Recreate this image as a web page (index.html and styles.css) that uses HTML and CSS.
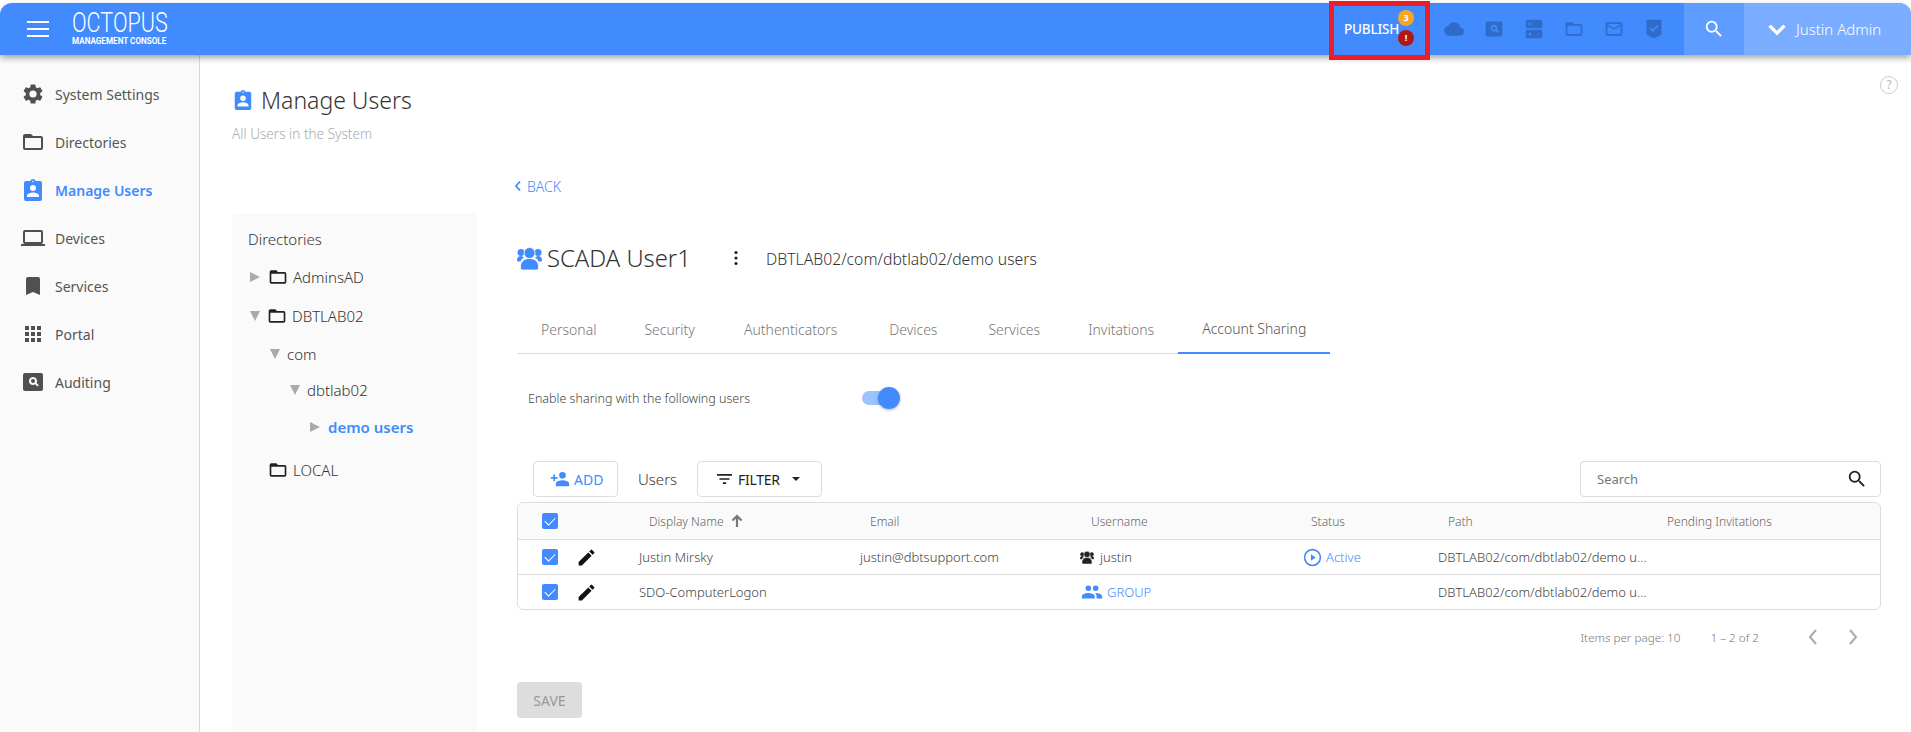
FILE: index.html
```html
<!DOCTYPE html>
<html lang="en">
<head>
<meta charset="utf-8">
<title>Manage Users</title>
<link rel="stylesheet" href="styles.css">
</head>
<body>
<header class="topbar">
  <div class="burger"><span></span><span></span><span></span></div>
  <div class="logo"><div class="logo-main">OCTOPUS</div><div class="logo-sub">MANAGEMENT CONSOLE</div></div>
  <div class="spring"></div>
  <div class="publish">
    <span>PUBLISH</span>
    <b class="pub-badge warn">3</b>
    <b class="pub-badge err">!</b>
  </div>
  <div class="status-icons">
    <svg viewBox="0 0 24 24"><path d="M19.35 10.04A7.49 7.49 0 0 0 12 4a7.5 7.5 0 0 0-6.65 4.04A6 6 0 0 0 6 20h13a5 5 0 0 0 .35-9.96z"/></svg>
    <svg viewBox="0 0 24 24"><path fill-rule="evenodd" d="M4 3h16a2 2 0 0 1 2 2v14a2 2 0 0 1-2 2H4a2 2 0 0 1-2-2V5a2 2 0 0 1 2-2zm8 4a4 4 0 1 0 2.2 7.3l2.3 2.3 1.4-1.4-2.3-2.3A4 4 0 0 0 12 7zm0 2a2 2 0 1 1 0 4 2 2 0 0 1 0-4z"/></svg>
    <svg viewBox="0 0 24 24"><path fill-rule="evenodd" d="M4 1h16a2 2 0 0 1 2 2v6a2 2 0 0 1-2 2H4a2 2 0 0 1-2-2V3a2 2 0 0 1 2-2zm3 3.500a1.500 1.500 0 1 0 0 3 1.500 1.500 0 0 0 0-3zM4 13h16a2 2 0 0 1 2 2v6a2 2 0 0 1-2 2H4a2 2 0 0 1-2-2v-6a2 2 0 0 1 2-2zm3 3.500a1.500 1.500 0 1 0 0 3 1.500 1.500 0 0 0 0-3z"/></svg>
    <svg viewBox="0 0 24 24"><path d="M20 6h-8l-2-2H4a2 2 0 0 0-2 2v12a2 2 0 0 0 2 2h16a2 2 0 0 0 2-2V8a2 2 0 0 0-2-2zm0 12H4V8h16v10z"/></svg>
    <svg viewBox="0 0 24 24"><path d="M20 4H4a2 2 0 0 0-2 2v12a2 2 0 0 0 2 2h16a2 2 0 0 0 2-2V6a2 2 0 0 0-2-2zm0 14H4V8l8 5 8-5v10zm-8-7L4 6h16l-8 5z"/></svg>
    <svg viewBox="0 0 24 24"><path fill-rule="evenodd" d="M3 1h18v18l-9 4-9-4V1zm7.500 14.500 7-7L16 7l-5.500 5.500L8 10l-1.500 1.500 4 4z"/></svg>
  </div>
  <div class="top-search">
    <svg viewBox="0 0 24 24"><path d="M15.500 14h-.79l-.28-.27A6.470 6.470 0 0 0 16 9.500 6.500 6.500 0 1 0 9.500 16c1.610 0 3.090-.59 4.230-1.570l.27.28v.79l5 4.990L20.490 19l-4.990-5zm-6 0a4.500 4.500 0 1 1 0-9 4.500 4.500 0 0 1 0 9z"/></svg>
  </div>
  <div class="top-user">
    <svg viewBox="0 0 24 24"><path d="M3 8l9 9 9-9" fill="none" stroke="#fff" stroke-width="4"/></svg>
    <span>Justin Admin</span>
  </div>
</header>

<div class="shell">
  <nav class="sidebar">
    <a class="nav-item"><svg viewBox="0 0 24 24"><path d="M19.140 12.940a7.400 7.400 0 0 0 0-1.880l2.030-1.580a.5.5 0 0 0 .12-.61l-1.920-3.320a.5.5 0 0 0-.59-.22l-2.390.96a7 7 0 0 0-1.620-.94l-.36-2.540a.5.5 0 0 0-.48-.41h-3.840a.5.5 0 0 0-.47.410l-.36 2.540a7.200 7.200 0 0 0-1.620.94l-2.390-.96a.5.5 0 0 0-.59.22L2.740 8.870a.5.5 0 0 0 .12.61l2.030 1.580a7.500 7.500 0 0 0 0 1.880l-2.030 1.580a.5.5 0 0 0-.12.61l1.920 3.320c.12.22.37.29.59.22l2.390-.96c.5.380 1.030.7 1.620.94l.36 2.540c.05.240.24.410.48.410h3.840c.24 0 .44-.17.47-.41l.36-2.540a7 7 0 0 0 1.620-.94l2.390.96c.22.08.47 0 .59-.22l1.920-3.320a.5.5 0 0 0-.12-.61l-2.010-1.580zM12 15.600a3.600 3.600 0 1 1 0-7.200 3.600 3.600 0 0 1 0 7.200z"/></svg><span>System Settings</span></a>
    <a class="nav-item"><svg viewBox="0 0 24 24"><path d="M20 6h-8l-2-2H4a2 2 0 0 0-2 2v12a2 2 0 0 0 2 2h16a2 2 0 0 0 2-2V8a2 2 0 0 0-2-2zm0 12H4V8h16v10z"/></svg><span>Directories</span></a>
    <a class="nav-item active"><svg viewBox="0 0 24 24"><path fill-rule="evenodd" d="M19 3h-4.180A3 3 0 0 0 12 1a3 3 0 0 0-2.820 2H5a2 2 0 0 0-2 2v16a2 2 0 0 0 2 2h14a2 2 0 0 0 2-2V5a2 2 0 0 0-2-2zm-7-.25a.75.75 0 1 1 0 1.500.75.75 0 0 1 0-1.500zM12 7a3 3 0 1 1 0 6 3 3 0 0 1 0-6zm6 12H6v-1.400c0-2 4-3.100 6-3.100s6 1.100 6 3.100V19z"/></svg><span>Manage Users</span></a>
    <a class="nav-item"><svg viewBox="0 0 24 24"><path d="M20 18a2 2 0 0 0 2-2V6a2 2 0 0 0-2-2H4a2 2 0 0 0-2 2v10a2 2 0 0 0 2 2H0v2h24v-2h-4zM4 6h16v10H4V6z"/></svg><span>Devices</span></a>
    <a class="nav-item"><svg viewBox="0 0 24 24"><path d="M17 3H7a2 2 0 0 0-2 2v16l7-3 7 3V5a2 2 0 0 0-2-2z"/></svg><span>Services</span></a>
    <a class="nav-item"><svg viewBox="0 0 24 24"><path d="M4 8h4V4H4v4zm6 12h4v-4h-4v4zm-6 0h4v-4H4v4zm0-6h4v-4H4v4zm6 0h4v-4h-4v4zm6-10v4h4V4h-4zm-6 4h4V4h-4v4zm6 6h4v-4h-4v4zm0 6h4v-4h-4v4z"/></svg><span>Portal</span></a>
    <a class="nav-item"><svg viewBox="0 0 24 24"><path fill-rule="evenodd" d="M4 3h16a2 2 0 0 1 2 2v14a2 2 0 0 1-2 2H4a2 2 0 0 1-2-2V5a2 2 0 0 1 2-2zm8 4a4 4 0 1 0 2.200 7.300l2.300 2.300 1.400-1.400-2.300-2.300A4 4 0 0 0 12 7zm0 2a2 2 0 1 1 0 4 2 2 0 0 1 0-4z"/></svg><span>Auditing</span></a>
  </nav>

  <main class="content">
    <div class="page-head">
      <h1 class="page-title"><svg viewBox="0 0 24 24"><path fill-rule="evenodd" d="M19 3h-4.180A3 3 0 0 0 12 1a3 3 0 0 0-2.820 2H5a2 2 0 0 0-2 2v16a2 2 0 0 0 2 2h14a2 2 0 0 0 2-2V5a2 2 0 0 0-2-2zm-7-.25a.75.75 0 1 1 0 1.500.75.75 0 0 1 0-1.500zM12 7a3 3 0 1 1 0 6 3 3 0 0 1 0-6zm6 12H6v-1.400c0-2 4-3.100 6-3.100s6 1.100 6 3.100V19z"/></svg>Manage Users</h1>
      <p class="page-sub">All Users in the System</p>
      <div class="help">?</div>
    </div>

    <div class="columns">
      <aside class="tree">
        <div class="tree-title">Directories</div>
        <div class="tree-row t1"><i class="tri right"></i><svg class="folder" viewBox="0 0 24 24"><path d="M20 6h-8l-2-2H4a2 2 0 0 0-2 2v12a2 2 0 0 0 2 2h16a2 2 0 0 0 2-2V8a2 2 0 0 0-2-2zm0 12H4V8h16v10z"/></svg><span>AdminsAD</span></div>
        <div class="tree-row t2"><i class="tri down"></i><svg class="folder" viewBox="0 0 24 24"><path d="M20 6h-8l-2-2H4a2 2 0 0 0-2 2v12a2 2 0 0 0 2 2h16a2 2 0 0 0 2-2V8a2 2 0 0 0-2-2zm0 12H4V8h16v10z"/></svg><span>DBTLAB02</span></div>
        <div class="tree-row t3"><i class="tri down"></i><span>com</span></div>
        <div class="tree-row t4"><i class="tri down"></i><span>dbtlab02</span></div>
        <div class="tree-row t5 sel"><i class="tri right"></i><span>demo users</span></div>
        <div class="tree-row t6"><svg class="folder" viewBox="0 0 24 24"><path d="M20 6h-8l-2-2H4a2 2 0 0 0-2 2v12a2 2 0 0 0 2 2h16a2 2 0 0 0 2-2V8a2 2 0 0 0-2-2zm0 12H4V8h16v10z"/></svg><span>LOCAL</span></div>
      </aside>

      <section class="detail">
        <a class="back"><svg viewBox="0 0 10 12"><path d="M7 1.500 3 6l4 4.500" fill="none" stroke="#418BFF" stroke-width="1.800"/></svg>BACK</a>
        <div class="user-head">
          <svg class="group-ic" viewBox="0 0 25 23"><g fill="#418BFF"><circle cx="4" cy="5.500" r="3.500"/><circle cx="21" cy="5.500" r="3.500"/><path d="M0 13c0-2 1.500-4 4-4 1 0 2 .5 3 1.500-1.500.8-3 2-3.500 4H1c-.6 0-1-.6-1-1.500zM25 13c0-2-1.500-4-4-4-1 0-2 .5-3 1.500 1.500.8 3 2 3.500 4H24c.6 0 1-.6 1-1.500z"/><circle cx="12.500" cy="6" r="5.500" stroke="#fff" stroke-width=".8"/><path d="M3.500 20c0-5 3-8.500 9-8.500s9 3.500 9 8.500v1c0 1-1 2-2 2h-14c-1 0-2-1-2-2z" stroke="#fff" stroke-width=".8"/></g></svg>
          <h2 class="user-name">SCADA User1</h2>
          <svg class="dots" viewBox="0 0 4 16"><circle cx="2" cy="2.500" r="1.600"/><circle cx="2" cy="8" r="1.600"/><circle cx="2" cy="13.500" r="1.600"/></svg>
          <span class="user-path">DBTLAB02/com/dbtlab02/demo users</span>
        </div>
        <div class="tabs">
          <span>Personal</span><span>Security</span><span>Authenticators</span><span>Devices</span><span>Services</span><span>Invitations</span><span class="on">Account Sharing</span>
        </div>
        <div class="share-row">
          <span>Enable sharing with the following users</span>
          <div class="toggle"><i></i></div>
        </div>
        <div class="toolbar">
          <button class="btn add"><svg viewBox="0 0 24 20"><path fill="#418BFF" d="M15 9a4 4 0 1 0 0-8 4 4 0 0 0 0 8zM6 7V4H4v3H1v2h3v3h2V9h3V7H6zm9 4c-2.700 0-8 1.300-8 4v3h16v-3c0-2.700-5.300-4-8-4z"/></svg>ADD</button>
          <span class="tb-label">Users</span>
          <button class="btn filter"><svg viewBox="0 0 18 12"><path fill="#222" d="M0 0h18v2H0zM3 5h12v2H3zM7 10h4v2H7z"/></svg>FILTER<i class="caret"></i></button>
          <div class="spring"></div>
          <div class="search"><span>Search</span><svg viewBox="0 0 24 24"><path fill="#222" d="M15.500 14h-.79l-.28-.27A6.470 6.470 0 0 0 16 9.500 6.500 6.500 0 1 0 9.500 16c1.610 0 3.090-.59 4.230-1.570l.27.28v.79l5 4.990L20.490 19l-4.990-5zm-6 0a4.500 4.500 0 1 1 0-9 4.500 4.500 0 0 1 0 9z"/></svg></div>
        </div>
        <div class="table">
          <div class="tr th">
            <div class="c-check"><i class="cb"></i></div>
            <div class="c-edit"></div>
            <div class="c-name hd">Display Name<svg viewBox="0 0 12 14"><path d="M6 13V2.500M1.500 6.500 6 2l4.500 4.500" fill="none" stroke="#777" stroke-width="2.200"/></svg></div>
            <div class="c-mail hd">Email</div>
            <div class="c-user hd">Username</div>
            <div class="c-stat hd">Status</div>
            <div class="c-path hd">Path</div>
            <div class="c-pend">Pending Invitations</div>
          </div>
          <div class="tr">
            <div class="c-check"><i class="cb"></i></div>
            <div class="c-edit"><svg viewBox="0 0 24 24"><path d="M3 17.250V21h3.750L17.810 9.940l-3.750-3.750L3 17.250zM20.710 7.040a1 1 0 0 0 0-1.410l-2.340-2.340a1 1 0 0 0-1.410 0l-1.830 1.830 3.750 3.750 1.830-1.830z"/></svg></div>
            <div class="c-name">Justin Mirsky</div>
            <div class="c-mail">justin@dbtsupport.com</div>
            <div class="c-user"><svg class="ppl" viewBox="0 0 25 23"><g fill="#222"><circle cx="4" cy="5.500" r="3.500"/><circle cx="21" cy="5.500" r="3.500"/><path d="M0 13c0-2 1.500-4 4-4 1 0 2 .5 3 1.500-1.500.8-3 2-3.500 4H1c-.6 0-1-.6-1-1.500zM25 13c0-2-1.500-4-4-4-1 0-2 .5-3 1.500 1.500.8 3 2 3.500 4H24c.6 0 1-.6 1-1.500z"/><circle cx="12.500" cy="6" r="5.500" stroke="#fff" stroke-width=".8"/><path d="M3.500 20c0-5 3-8.500 9-8.500s9 3.500 9 8.500v1c0 1-1 2-2 2h-14c-1 0-2-1-2-2z" stroke="#fff" stroke-width=".8"/></g></svg>justin</div>
            <div class="c-stat blue"><svg viewBox="0 0 24 24"><circle cx="12" cy="12" r="10" fill="none" stroke="#418BFF" stroke-width="2"/><path fill="#418BFF" d="M10 8l6 4-6 4z"/></svg>Active</div>
            <div class="c-path">DBTLAB02/com/dbtlab02/demo u...</div>
            <div class="c-pend"></div>
          </div>
          <div class="tr">
            <div class="c-check"><i class="cb"></i></div>
            <div class="c-edit"><svg viewBox="0 0 24 24"><path d="M3 17.250V21h3.750L17.810 9.940l-3.750-3.750L3 17.250zM20.710 7.040a1 1 0 0 0 0-1.410l-2.340-2.340a1 1 0 0 0-1.410 0l-1.830 1.830 3.750 3.750 1.830-1.830z"/></svg></div>
            <div class="c-name">SDO-ComputerLogon</div>
            <div class="c-mail"></div>
            <div class="c-user blue"><svg class="grp" viewBox="0 0 24 24"><path fill="#418BFF" d="M16 11a3 3 0 1 0 0-6 3 3 0 0 0 0 6zm-8 0a3 3 0 1 0 0-6 3 3 0 0 0 0 6zm0 2c-2.300 0-7 1.200-7 3.500V19h14v-2.500C15 14.200 10.300 13 8 13zm8 0h-1c1.200.8 2 2 2 3.500V19h6v-2.500c0-2.300-4.700-3.500-7-3.500z"/></svg>GROUP</div>
            <div class="c-stat"></div>
            <div class="c-path">DBTLAB02/com/dbtlab02/demo u...</div>
            <div class="c-pend"></div>
          </div>
        </div>
        <div class="pager">
          <span>Items per page: 10</span>
          <span class="range">1 – 2 of 2</span>
          <svg viewBox="0 0 12 20"><path d="M9 3 3 10l6 7" fill="none" stroke="#aaa" stroke-width="2"/></svg>
          <svg viewBox="0 0 12 20"><path d="M3 3l6 7-6 7" fill="none" stroke="#aaa" stroke-width="2"/></svg>
        </div>
        <button class="save">SAVE</button>
      </section>
    </div>
  </main>
</div>
</body>
</html>
```

FILE: styles.css
```css
* { box-sizing: border-box; }
html, body { height: 100%; }
body {
  margin: 0;
  height: 732px;
  overflow: hidden;
  background: #fff;
  color: #333;
  font-family: "Noto Sans", "Open Sans", sans-serif;
  font-size: 14px;
  padding-top: 3px;
}
.spring { flex: 1; }

.topbar {
  position: relative;
  z-index: 2;
  height: 52px;
  display: flex;
  align-items: stretch;
  background: #418BFF;
  border-radius: 12px 12px 0 0;
  box-shadow: 0 3px 6px rgba(0,0,0,.35);
  color: #fff;
}
.burger {
  width: 22px;
  margin-left: 27px;
  display: flex;
  flex-direction: column;
  justify-content: center;
  gap: 5px;
}
.burger span { height: 2px; background: #fff; display: block; }
.logo { margin-left: 23px; padding-top: 9px; width: 100px; }
.logo-main {
  font-family: "Roboto", sans-serif;
  font-weight: 300;
  font-size: 28px;
  line-height: 22px;
  transform: scaleX(.77);
  transform-origin: left;
}
.logo-sub {
  font-family: "Roboto", sans-serif;
  font-size: 8.150px;
  font-weight: 700;
  line-height: 10px;
  margin-top: 2px;
  white-space: nowrap;
}
.publish {
  position: relative;
  width: 101px;
  margin-top: -2px;
  margin-bottom: -5px;
  border: 5px solid #EE1C25;
  display: flex;
  align-items: center;
  padding: 0 0 3px 10px;
  font-size: 13.500px;
  font-weight: 500;
  letter-spacing: -.2px;
  z-index: 3;
}
.pub-badge {
  position: absolute;
  left: 64px;
  width: 16px;
  height: 16px;
  border-radius: 50%;
  font-size: 9px;
  line-height: 16px;
  letter-spacing: 0;
  text-align: center;
  color: #fff;
}
.pub-badge.warn { top: 4px; background: #F5A623; }
.pub-badge.err { top: 24px; background: #B01818; }
.status-icons {
  width: 254px;
  padding-left: 14px;
  display: flex;
  align-items: center;
  gap: 20px;
}
.status-icons svg { width: 20px; height: 20px; fill: #2F6BC9; }
.top-search {
  width: 60px;
  background: #5E9DFF;
  display: flex;
  align-items: center;
  justify-content: center;
}
.top-search svg { width: 22px; height: 22px; fill: #fff; }
.top-user {
  width: 167px;
  background: #7AADFF;
  border-radius: 0 12px 0 0;
  display: flex;
  align-items: center;
  padding-left: 23px;
  gap: 9px;
  font-size: 15px;
  font-weight: 300;
}
.top-user svg { width: 20px; height: 20px; }

.shell { display: flex; height: 677px; }
.sidebar {
  width: 200px;
  flex: none;
  background: #FAFAFA;
  border-right: 1px solid #D8D8D8;
  padding-top: 15px;
}
.nav-item {
  height: 48px;
  display: flex;
  align-items: center;
  padding-left: 21px;
  gap: 10px;
  color: #555;
  font-size: 14px;
}
.nav-item svg { width: 24px; height: 24px; fill: #505050; flex: none; }
.nav-item.active { color: #418BFF; font-weight: 600; }
.nav-item.active svg { fill: #418BFF; }

.content { flex: 1; min-width: 0; display: flex; flex-direction: column; }
.page-head { position: relative; padding: 29px 32px 0; height: 158px; }
.page-title {
  margin: 0;
  display: flex;
  align-items: center;
  gap: 7px;
  font-size: 23px;
  line-height: 32px;
  font-weight: 300;
  color: #333;
}
.page-title svg { width: 22px; height: 22px; fill: #418BFF; }
.page-sub { margin: 8px 0 0; font-size: 13.600px; color: #aaa; font-weight: 300; }
.help {
  position: absolute;
  right: 13px;
  top: 21px;
  width: 18px;
  height: 18px;
  border: 1.500px solid #ccc;
  border-radius: 50%;
  color: #bbb;
  font-size: 12px;
  line-height: 15px;
  text-align: center;
}
.columns { display: flex; flex: 1; min-height: 0; padding-left: 32px; }
.tree {
  width: 245px;
  flex: none;
  background: #FAFAFA;
  border-radius: 6px 6px 0 0;
  padding: 14px 0 0 16px;
  color: #333;
  font-size: 15px;
  font-weight: 300;
}
.tree-title { height: 24px; line-height: 24px; }
.tree-row { display: flex; align-items: center; gap: 5px; height: 38px; }
.tree-row .folder { width: 20px; height: 20px; fill: #222; }
.tri { display: block; width: 0; height: 0; flex: none; }
.tri.right { border-left: 10px solid #aaa; border-top: 5.500px solid transparent; border-bottom: 5.500px solid transparent; margin-right: 3px; }
.tri.down { border-top: 10px solid #aaa; border-left: 5.500px solid transparent; border-right: 5.500px solid transparent; margin-right: 2px; }
.t1 { padding-left: 2px; margin-top: 7px; }
.t2 { padding-left: 2px; height: 39px; }
.t3 { padding-left: 22px; height: 37px; }
.t4 { padding-left: 42px; height: 36px; }
.t5 { padding-left: 62px; height: 38px; }
.t5.sel span { color: #418BFF; font-weight: 600; }
.t6 { padding-left: 20px; margin-top: 5px; }

.detail { width: 1364px; margin-left: 40px; margin-top: -38px; display: flex; flex-direction: column; }
.back { display: flex; align-items: center; gap: 4px; color: #418BFF; font-size: 14px; height: 22px; margin-left: -4px; font-weight: 300; }
.back svg { width: 10px; height: 12px; }
.user-head { display: flex; align-items: center; margin-top: 45px; height: 32px; }
.group-ic { width: 25px; height: 23px; margin-right: 5px; }
.user-name { margin: 0; font-size: 23.800px; font-weight: 300; color: #333; width: 188px; white-space: nowrap; }
.dots { width: 4px; height: 16px; fill: #222; margin-left: -1px; }
.user-path { margin-left: 28px; padding-top: 2px; font-size: 15.750px; font-weight: 300; color: #333; }
.tabs {
  display: flex;
  margin-top: 31px;
  width: 813px;
  height: 49px;
  border-bottom: 1px solid #DDD;
  align-items: stretch;
  color: #777;
  font-size: 14px;
  font-weight: 300;
  padding-left: 24px;
  gap: 48px;
}
.tabs span { display: flex; align-items: center; flex: none; white-space: nowrap; }
.tabs span:nth-child(3) { margin-left: 1px; }
.tabs span:nth-child(4) { margin-left: 4px; }
.tabs span:nth-child(5) { margin-left: 3px; }
.tabs .on { color: #555; border-bottom: 2px solid #418BFF; margin-left: -24px; padding: 0 24px; height: 49px; }
.share-row { display: flex; align-items: center; height: 32px; margin-top: 28px; padding-left: 11px; font-size: 12.500px; color: #444; font-weight: 300; }
.share-row span { width: 346px; }
.toggle { position: relative; width: 36px; height: 14px; border-radius: 7px; background: #9DC3FF; margin-left: -12px; }
.toggle i { position: absolute; right: -2px; top: -4px; width: 22px; height: 22px; border-radius: 50%; background: #418BFF; box-shadow: 0 1px 3px rgba(0,0,0,.3); }
.toolbar { display: flex; align-items: center; height: 36px; margin-top: 47px; padding-left: 16px; }
.btn {
  height: 36px;
  background: #fff;
  border: 1px solid #DDD;
  border-radius: 4px;
  display: flex;
  align-items: center;
  font-family: inherit;
  font-size: 14px;
}
.btn.add { width: 85px; padding-left: 16px; gap: 4px; color: #418BFF; }
.btn.add svg { width: 20px; height: 17px; }
.tb-label { margin: 0 20px; font-size: 15px; font-weight: 300; color: #333; }
.btn.filter { width: 125px; padding-left: 19px; gap: 6px; color: #222; letter-spacing: -.3px; }
.btn.filter svg { width: 15px; height: 10px; }
.caret { border-top: 4px solid #222; border-left: 4px solid transparent; border-right: 4px solid transparent; margin-left: 6px; }
.search {
  width: 301px;
  height: 36px;
  border: 1px solid #DDD;
  border-radius: 4px;
  display: flex;
  align-items: center;
  justify-content: space-between;
  padding: 0 12px 0 16px;
  color: #777;
  font-size: 13px;
}
.search svg { width: 22px; height: 22px; }
.table { margin-top: 5px; border: 1px solid #DDD; border-radius: 6px; font-size: 13px; color: #444; font-weight: 300; }
.tr { display: flex; align-items: center; height: 35px; border-bottom: 1px solid #DDD; }
.tr:last-child { border-bottom: 0; height: 34px; }
.tr.th { height: 37px; background: #FAFAFA; border-radius: 6px 6px 0 0; font-size: 12px; color: #666; }
.c-check { width: 50px; padding-left: 24px; flex: none; }
.cb {
  display: block;
  width: 16px;
  height: 16px;
  border-radius: 2px;
  background: #418BFF;
  position: relative;
}
.cb::after {
  content: "";
  position: absolute;
  left: 5px;
  top: 2px;
  width: 5px;
  height: 9px;
  border: solid #fff;
  border-width: 0 1.500px 1.500px 0;
  transform: rotate(45deg);
}
.c-edit { width: 71px; padding-left: 8px; flex: none; }
.c-edit svg { display: block; width: 21px; height: 21px; fill: #111; }
.c-name { width: 221px; flex: none; white-space: nowrap; }
.c-name.hd { padding-left: 10px; display: flex; align-items: center; gap: 7px; }
.c-name svg { width: 12px; height: 14px; }
.c-mail { width: 221px; flex: none; white-space: nowrap; }
.c-mail.hd { padding-left: 10px; }
.c-user { width: 222px; flex: none; display: flex; align-items: center; gap: 6px; }
.c-user.hd { padding-left: 10px; }
.c-user .ppl { width: 14px; height: 13px; margin-left: -1px; }
.c-user .grp { width: 22px; height: 22px; margin-right: -2px; }
.c-stat { width: 135px; flex: none; display: flex; align-items: center; gap: 4px; }
.c-stat.hd { padding-left: 8px; }
.c-stat svg { width: 19px; height: 19px; }
.blue { color: #418BFF; }
.c-path { width: 229px; flex: none; white-space: nowrap; overflow: hidden; }
.c-path.hd { padding-left: 10px; }
.c-pend { flex: 1; white-space: nowrap; font-size: 12px; color: #666; }
.pager { display: flex; align-items: center; justify-content: flex-end; height: 30px; margin-top: 12px; font-size: 11.700px; color: #777; font-weight: 300; padding-right: 22px; }
.pager .range { margin-left: 30px; margin-right: 20px; }
.pager svg { width: 12px; height: 20px; margin-left: 28px; }
.save {
  width: 65px;
  height: 36px;
  margin-top: 30px;
  border: 0;
  border-radius: 4px;
  background: #DDD;
  color: #999;
  font-family: inherit;
  font-size: 14px;
}
```
